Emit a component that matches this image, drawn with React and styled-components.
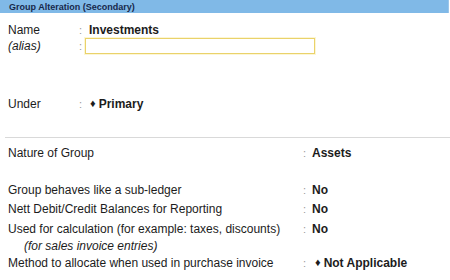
import React from 'react';
import styled, { createGlobalStyle } from 'styled-components';

const GlobalStyle = createGlobalStyle`
  body {
    margin: 0;
    background: #ffffff;
    font-family: "Liberation Sans", Arial, sans-serif;
    color: #1c1c1c;
  }
`

const Screen = styled.div`
  width: 450px;
  height: 280px;
  overflow: hidden;
  background: #ffffff;
`

const TitleBar = styled.div`
  height: 13px;
  width: 449px;
  background: #80b9e7;
  border-right: 1px solid #9cc6ea;
  color: #17284a;
  font-size: 9px;
  font-weight: 700;
  line-height: 14px;
  padding-left: 9px;
  box-sizing: border-box;
`

const TopGrid = styled.div`
  display: grid;
  grid-template-columns: 71px 6px 240px;
  align-items: center;
  padding: 9px 0 0 8px;
  font-size: 12px;
  line-height: 16px;
`

const Spacer = styled.div`
  grid-column: 1 / -1;
  height: ${props => props.h}px;
`

const Label = styled.div`
  font-style: ${props => props.italic ? 'italic' : 'normal'};
  white-space: nowrap;
`

const Colon = styled.div`
  color: #9a9a9a;
  font-size: 11px;
`

const Value = styled.div`
  font-weight: 700;
  padding-left: ${props => props.pad ?? 4}px;
  white-space: nowrap;
`

const Diamond = styled.span`
  font-size: 11px;
  margin-right: 3px;
  position: relative;
  top: -1px;
`

const AliasInput = styled.div`
  width: 230px;
  height: 16px;
  box-sizing: border-box;
  border: 1px solid #ead26a;
  box-shadow: 0 0 0 1px #fcf6d6;
  background: #ffffff;
`

const Separator = styled.div`
  margin: 25px 0 0 5px;
  border-top: 1px solid #d9d9d9;
`

const BottomGrid = styled.div`
  display: grid;
  grid-template-columns: 295px 8px 140px;
  padding: 6px 0 0 8px;
  font-size: 12px;
  line-height: 19.5px;
`

const Note = styled.div`
  grid-column: 1 / -1;
  font-style: italic;
  padding-left: 16px;
  line-height: 14px;
  margin-bottom: 1px;
`

const App = () => {
  return (
    <>
      <GlobalStyle />
      <Screen>
        <TitleBar>Group Alteration (Secondary)</TitleBar>
        <TopGrid>
          <Label>Name</Label>
          <Colon>:</Colon>
          <Value>Investments</Value>
          <Label italic>(alias)</Label>
          <Colon>:</Colon>
          <AliasInput />
          <Spacer h={42} />
          <Label>Under</Label>
          <Colon>:</Colon>
          <Value pad={5}><Diamond>♦</Diamond>Primary</Value>
        </TopGrid>
        <Separator />
        <BottomGrid>
          <Label>Nature of Group</Label>
          <Colon>:</Colon>
          <Value pad={1}>Assets</Value>
          <Spacer h={17} />
          <Label>Group behaves like a sub-ledger</Label>
          <Colon>:</Colon>
          <Value pad={1}>No</Value>
          <Label>Nett Debit/Credit Balances for Reporting</Label>
          <Colon>:</Colon>
          <Value pad={1}>No</Value>
          <Label>Used for calculation (for example: taxes, discounts)</Label>
          <Colon>:</Colon>
          <Value pad={1}>No</Value>
          <Note>(for sales invoice entries)</Note>
          <Label>Method to allocate when used in purchase invoice</Label>
          <Colon>:</Colon>
          <Value pad={4}><Diamond>♦</Diamond>Not Applicable</Value>
        </BottomGrid>
      </Screen>
    </>
  );
}

export default App;
